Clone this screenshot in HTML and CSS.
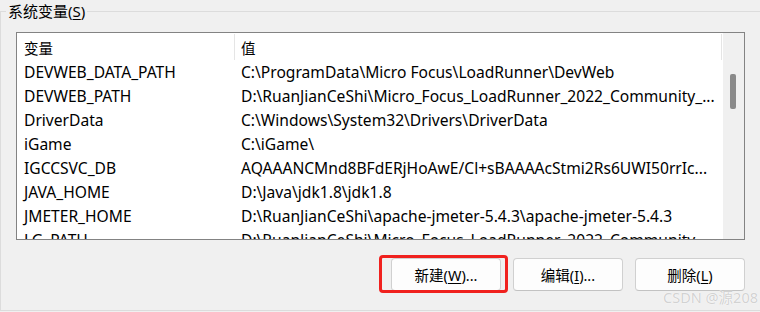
FILE: index.html
```html
<!DOCTYPE html>
<html lang="zh-CN">
<head>
    <meta charset="UTF-8">
    <meta name="viewport" content="width=device-width, initial-scale=1.0">
    <link rel="stylesheet" href="styles.css">
    <title>系统变量</title>
</head>
<body>
    <fieldset class="group">
        <legend>系统变量(<u>S</u>)</legend>
        <div class="list">
            <div class="list-body">
                <div class="list-head">
                    <div class="col name">变量</div>
                    <div class="col value">值</div>
                </div>
                <div class="row"><div class="col name">DEVWEB_DATA_PATH</div><div class="col value">C:\ProgramData\Micro Focus\LoadRunner\DevWeb</div></div>
                <div class="row"><div class="col name">DEVWEB_PATH</div><div class="col value">D:\RuanJianCeShi\Micro_Focus_LoadRunner_2022_Community_...</div></div>
                <div class="row"><div class="col name">DriverData</div><div class="col value">C:\Windows\System32\Drivers\DriverData</div></div>
                <div class="row"><div class="col name">iGame</div><div class="col value">C:\iGame\</div></div>
                <div class="row"><div class="col name">IGCCSVC_DB</div><div class="col value">AQAAANCMnd8BFdERjHoAwE/Cl+sBAAAAcStmi2Rs6UWI50rrIc...</div></div>
                <div class="row"><div class="col name">JAVA_HOME</div><div class="col value">D:\Java\jdk1.8\jdk1.8</div></div>
                <div class="row"><div class="col name">JMETER_HOME</div><div class="col value">D:\RuanJianCeShi\apache-jmeter-5.4.3\apache-jmeter-5.4.3</div></div>
                <div class="row"><div class="col name">LG_PATH</div><div class="col value">D:\RuanJianCeShi\Micro_Focus_LoadRunner_2022_Community</div></div>
            </div>
            <div class="scrollbar">
                <div class="thumb"></div>
            </div>
        </div>
        <div class="actions">
            <button class="btn marked">新建(<u>W</u>)...</button>
            <button class="btn">编辑(<u>I</u>)...</button>
            <button class="btn">删除(<u>L</u>)</button>
        </div>
    </fieldset>
    <div class="watermark">CSDN @源208</div>
</body>
</html>
```

FILE: styles.css
```css
* {
    margin: 0;
    padding: 0;
    box-sizing: border-box;
}
body {
    width: 760px;
    height: 312px;
    overflow: hidden;
    position: relative;
    background-color: #f0f0f0;
    font-family: "Noto Sans", "Noto Sans CJK SC", sans-serif;
    font-size: 14px;
    color: #000;
}
u {
    text-decoration-thickness: 1px;
    text-underline-offset: 2px;
}

.group {
    width: 790px;
    height: 311px;
    border: 1px solid #dcdcdc;
    padding: 0 30px 0 15px;
}
.group legend {
    margin-left: -10px;
    padding: 0 2px;
    font-size: 15px;
    line-height: 22px;
}

.list {
    display: flex;
    width: 729px;
    height: 208px;
    margin-top: 10px;
    border: 1px solid #838383;
    background-color: #fff;
}
.list-body {
    width: 706px;
    overflow: hidden;
}
.list-head {
    display: grid;
    grid-template-columns: 218px 487px;
    height: 27px;
    font-size: 14.5px;
}
.list-head .col {
    display: flex;
    align-items: center;
    border-right: 1px solid #e5e5e5;
    margin-top: 1px;
}
.row {
    display: grid;
    grid-template-columns: 218px 1fr;
    height: 24px;
    align-items: center;
    font-size: 15.6px;
}
.col {
    padding-left: 7px;
    white-space: nowrap;
    overflow: hidden;
}
.col.value {
    padding-left: 6px;
}
.scrollbar {
    width: 21px;
    background-color: #f0f0f0;
    padding: 41px 0 0 7px;
}
.thumb {
    width: 6px;
    height: 35px;
    border-radius: 2px;
    background-color: #8a8a8a;
}

.actions {
    display: flex;
    justify-content: flex-end;
    gap: 12px;
    width: 729px;
    margin-top: 18px;
}
.btn {
    position: relative;
    width: 110px;
    height: 33px;
    font: inherit;
    font-size: 14.5px;
    color: #000;
    background-color: #fdfdfd;
    border: 1px solid #d0d0d0;
    border-bottom-color: #c2c2c2;
    border-radius: 4px;
}
.marked::after {
    content: "";
    position: absolute;
    left: -13px;
    right: -8px;
    top: -4px;
    bottom: -3px;
    border: 3px solid #f0211e;
    border-radius: 4px;
}

.watermark {
    position: absolute;
    right: 2px;
    bottom: 5px;
    font-size: 14.5px;
    color: #d2d2d2;
    text-shadow: 0 0 1px #fff, 0 0 1px #fff;
}
```
